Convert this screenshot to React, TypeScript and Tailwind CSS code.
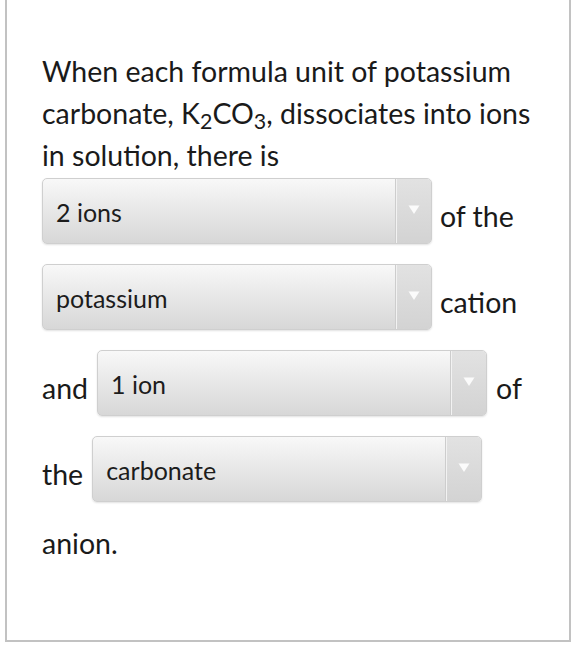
import React from 'react';

function Dropdown({ value }: { value: string }) {
  return (
    <div className="flex h-[66px] w-[390px] shrink-0 rounded-[5px] border border-[#cfcfcf] bg-linear-to-b from-[#f8f8f8] to-[#d7d7d7] shadow-[0_1px_2px_rgba(0,0,0,0.12)]">
      <div className="flex-1 pl-[13px] pt-[21px] text-[25px] leading-none text-[#1c1c1c]">{value}</div>
      <div className="flex w-[36px] justify-center rounded-r-[4px] border-l border-[#cdcdcd] bg-linear-to-b from-[#e2e2e2] to-[#d3d3d3] pt-[26px] shadow-[inset_1px_0_0_#f2f2f2]">
        <svg width="12" height="10" viewBox="0 0 12 10">
          <path d="M0.5 0.5 L11.5 0.5 L6 9 Z" fill="#fbfbfb" />
        </svg>
      </div>
    </div>
  );
}

function Label({ children }: { children: React.ReactNode }) {
  return <span className="mt-[17px] shrink-0 whitespace-nowrap">{children}</span>;
}

export default function App() {
  return (
    <div className="min-h-[647px] bg-white">
      <div className="ml-[5px] h-[642px] w-[566px] border-x-2 border-b-2 border-[#c2c2c2] pl-[35px] pt-[50px] font-[Lato,sans-serif] text-[28.5px] leading-[42px] text-[#1a1a1a]">
        <p className="pr-[24px]">
          When each formula unit of potassium carbonate, K<sub>2</sub>CO<sub>3</sub>, dissociates into ions in
          solution, there is
        </p>

        <div className="mt-[2px] flex flex-col gap-[20px]">
          <div className="flex items-start gap-[8px]">
            <Dropdown value="2 ions" />
            <Label>of the</Label>
          </div>
          <div className="flex items-start gap-[8px]">
            <Dropdown value="potassium" />
            <Label>cation</Label>
          </div>
          <div className="flex items-start gap-[9px]">
            <Label>and</Label>
            <Dropdown value="1 ion" />
            <Label>of</Label>
          </div>
          <div className="flex items-start gap-[9px]">
            <Label>the</Label>
            <Dropdown value="carbonate" />
          </div>
        </div>

        <p className="mt-[20px]">anion.</p>
      </div>
    </div>
  );
}
